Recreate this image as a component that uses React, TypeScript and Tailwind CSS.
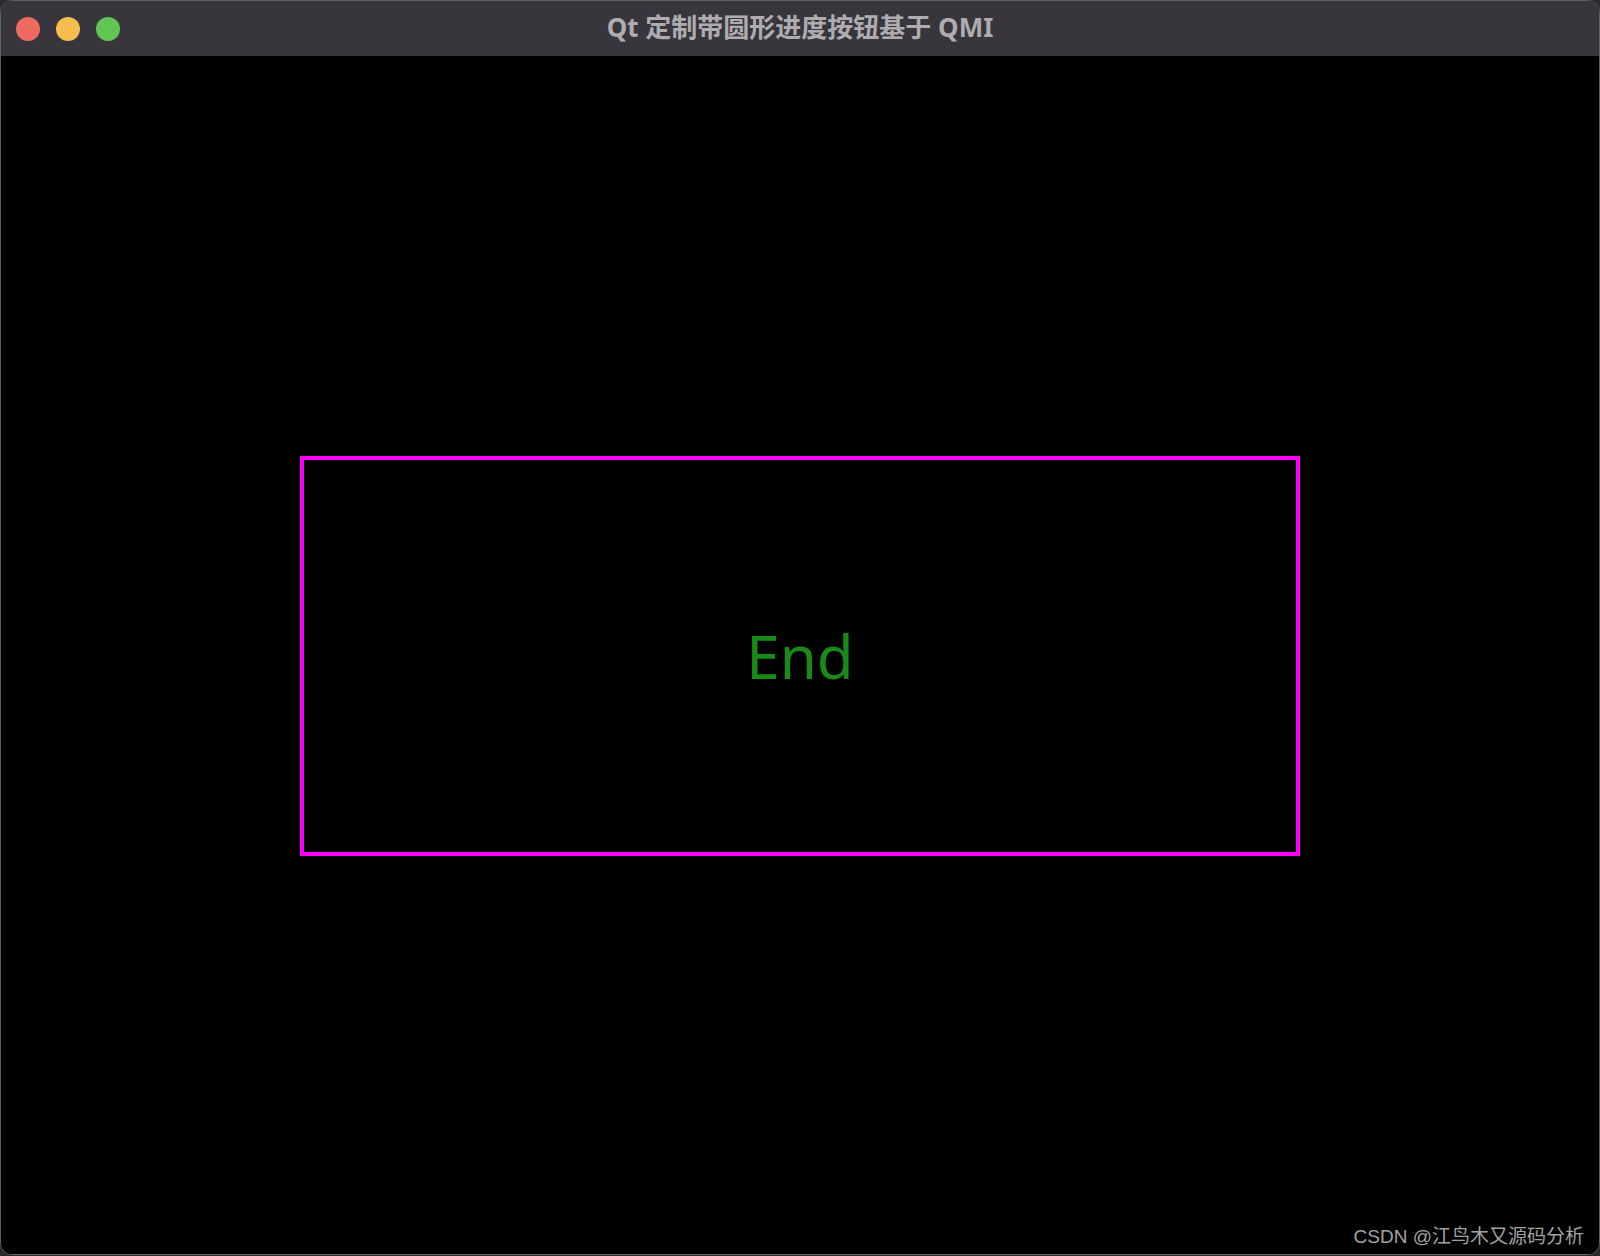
export default function App() {
  return (
    <div className="h-[1256px] w-[1600px] bg-[#2a2a2c] overflow-hidden">
      <div className="flex h-[1255px] w-[1600px] flex-col overflow-hidden rounded-[12px] border border-[#5e5d62] bg-black">
        <div className="grid h-[55px] shrink-0 grid-cols-[1fr_auto_1fr] items-center bg-[#38363c]">
          <div className="flex items-center gap-[16px] pl-[15px] pt-[1px]">
            <span className="h-[24px] w-[24px] rounded-full bg-[#ee6a5f]" />
            <span className="h-[24px] w-[24px] rounded-full bg-[#f5be4f]" />
            <span className="h-[24px] w-[24px] rounded-full bg-[#61c554]" />
          </div>
          <div className="pb-[3px] text-[26px] font-bold leading-none text-[#aeacb1] [font-family:'Noto_Sans','Noto_Sans_CJK_SC',sans-serif]">
            Qt 定制带圆形进度按钮基于 QMI
          </div>
          <div />
        </div>
        <div className="relative flex flex-1 items-center justify-center bg-black pt-[2px]">
          <div className="flex h-[400px] w-[1000px] items-center justify-center border-4 border-[#ff00ff]">
            <span className="text-[60px] leading-none text-[#178a17] [font-family:'Noto_Sans',sans-serif]">
              End
            </span>
          </div>
          <div className="absolute bottom-[8px] right-[15px] text-[19px] leading-none text-[#a3a3a3] [font-family:'Liberation_Sans','Noto_Sans_CJK_SC',sans-serif]">
            CSDN @江鸟木又源码分析
          </div>
        </div>
      </div>
    </div>
  );
}
